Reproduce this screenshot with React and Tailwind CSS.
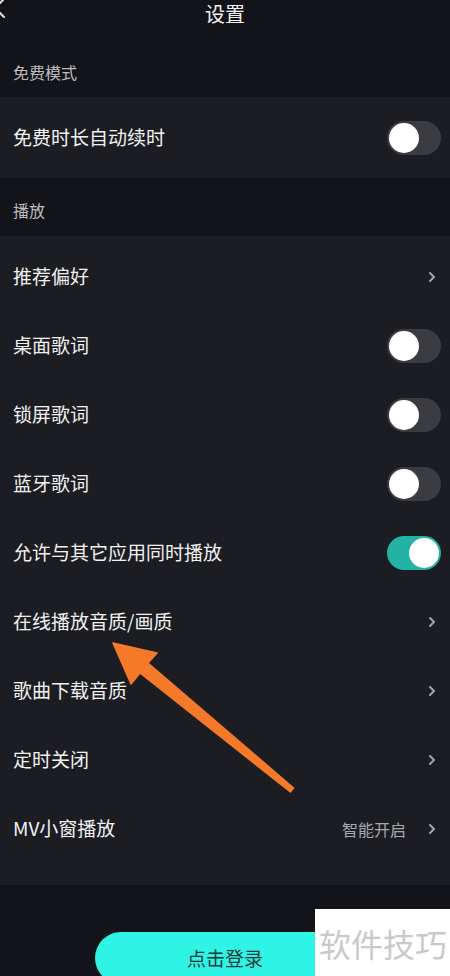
import { useState } from 'react';

const font = { fontFamily: '"Noto Sans CJK SC", "Noto Sans", sans-serif' };

function Toggle({ on }) {
  return (
    <div
      className={`w-[54px] h-[34px] rounded-full p-[2px] flex items-center ${on ? 'bg-[#22b3a4] justify-end' : 'bg-[#3b3c42] justify-start'}`}
    >
      <div className="w-[30px] h-[30px] rounded-full bg-white" />
    </div>
  );
}

function Chevron() {
  return (
    <svg className="w-[10px] h-[12px] mr-[4px]" viewBox="0 0 10 12" fill="none">
      <path d="M3 2l4 4-4 4" stroke="#a3a3a8" strokeWidth="2" strokeLinecap="round" strokeLinejoin="round" />
    </svg>
  );
}

function Row({ label, right }) {
  return (
    <div className="h-[69px] flex items-center justify-between pl-[13px] pr-[9px]">
      <span className="text-[19px] text-[#f2f2f2]">{label}</span>
      {right}
    </div>
  );
}

export default function App() {
  const [rows] = useState([
    { label: '推荐偏好', type: 'link' },
    { label: '桌面歌词', type: 'toggle', on: false },
    { label: '锁屏歌词', type: 'toggle', on: false },
    { label: '蓝牙歌词', type: 'toggle', on: false },
    { label: '允许与其它应用同时播放', type: 'toggle', on: true },
    { label: '在线播放音质/画质', type: 'link' },
    { label: '歌曲下载音质', type: 'link' },
    { label: '定时关闭', type: 'link' },
    { label: 'MV小窗播放', type: 'link', value: '智能开启' }
  ]);

  return (
    <div className="relative w-[450px] h-[976px] overflow-hidden bg-[#131419]" style={font}>
      {/* Header */}
      <div className="relative h-[26px] pt-[2px] flex items-center justify-center">
        <svg className="absolute left-[-8px] top-[-4px] w-[16px] h-[24px]" viewBox="0 0 16 24" fill="none">
          <path d="M12 3l-9 9 9 9" stroke="#e5e5e5" strokeWidth="2" strokeLinecap="round" />
        </svg>
        <span className="text-[20px] text-[#f2f2f2] leading-[22px]">设置</span>
      </div>

      {/* 免费模式 */}
      <div className="pt-[36px] pb-[15px] pl-[13px] text-[16px] leading-[20px] text-[#bdbdc0]">免费模式</div>
      <div className="bg-[#1c1d23] py-[6px]">
        <Row label="免费时长自动续时" right={<Toggle on={false} />} />
      </div>

      {/* 播放 */}
      <div className="pt-[22px] pb-[16px] pl-[13px] text-[16px] leading-[20px] text-[#bdbdc0]">播放</div>
      <div className="bg-[#1c1d23] pt-[6px] pb-[22px]">
        {rows.map((r) => (
          <Row
            key={r.label}
            label={r.label}
            right={
              r.type === 'toggle' ? (
                <Toggle on={r.on} />
              ) : (
                <div className="flex items-center gap-[21px]">
                  {r.value && <span className="text-[16px] text-[#a8a8ac]">{r.value}</span>}
                  <Chevron />
                </div>
              )
            }
          />
        ))}
      </div>

      {/* Login button */}
      <div className="flex justify-center pt-[47px]">
        <button className="w-[260px] h-[52px] rounded-full bg-[#2ff3e4] text-[19px] text-[#1d3b3a]">
          点击登录
        </button>
      </div>

      {/* Arrow annotation */}
      <svg className="absolute left-0 top-0 pointer-events-none" width="450" height="976" viewBox="0 0 450 976">
        <polygon
          points="113,643 157,653 148,663 293.6,788 290.4,792 140,673 131,684"
          fill="#f47a2a"
          stroke="#f47a2a"
          strokeWidth="1.5"
          strokeLinejoin="round"
        />
      </svg>

      {/* Watermark */}
      <div className="absolute left-[315px] top-[909px] w-[135px] h-[67px] bg-white flex items-center pl-[4px]">
        <span className="text-[32px] text-[#c9c9c9] leading-none">软件技巧</span>
      </div>
    </div>
  );
}
